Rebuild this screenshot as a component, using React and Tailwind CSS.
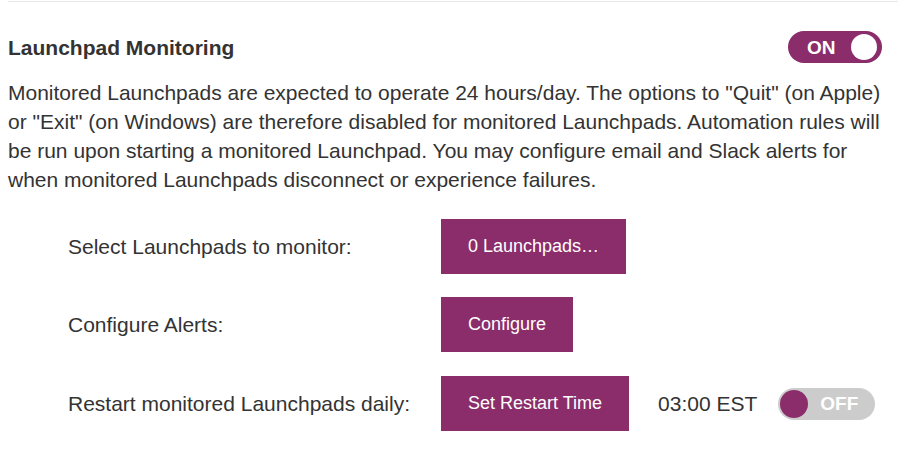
import { useState } from 'react';

function Toggle({ on, onClick, wide }) {
  return (
    <button
      onClick={onClick}
      className={`relative flex items-center h-[32px] rounded-full ${wide} ${
        on ? 'bg-[#8b2d6b]' : 'bg-[#cccccc]'
      }`}
    >
      {on ? (
        <>
          <span className="ml-[19px] text-[19px] font-bold text-white leading-none">ON</span>
          <span className="absolute right-[5px] top-[3px] w-[26px] h-[26px] rounded-full bg-white" />
        </>
      ) : (
        <>
          <span className="absolute left-[2px] top-[2px] w-[28px] h-[28px] rounded-full bg-[#8b2d6b]" />
          <span className="ml-[42px] text-[19px] font-bold text-white leading-none">OFF</span>
        </>
      )}
    </button>
  );
}

function Row({ label, children, className }) {
  return (
    <div className={`flex items-center ${className}`}>
      <div className="w-[373px]">{label}</div>
      {children}
    </div>
  );
}

function PurpleButton({ children }) {
  return (
    <button className="h-[55px] px-[27px] bg-[#8b2d6b] text-white text-[18px] whitespace-nowrap">
      {children}
    </button>
  );
}

export default function App() {
  const [monitoring, setMonitoring] = useState(true);
  const [restart, setRestart] = useState(false);

  return (
    <div
      className="pt-px pl-2 pr-[6px] bg-white text-[#333333] min-h-screen"
      style={{ fontFamily: '"Liberation Sans", Arial, sans-serif' }}
    >
      <div className="border-t border-[#e8e8e8]">
        <div className="flex items-center justify-between mt-[29px] pr-[16px] h-[32px]">
          <h2 className="text-[21px] font-bold leading-[29px]">Launchpad Monitoring</h2>
          <Toggle on={monitoring} onClick={() => setMonitoring(!monitoring)} wide="w-[94px]" />
        </div>

        <p className="mt-[15px] text-[21px] leading-[29px]">
          Monitored Launchpads are expected to operate 24 hours/day. The options to "Quit" (on Apple)
          or "Exit" (on Windows) are therefore disabled for monitored Launchpads. Automation rules will
          be run upon starting a monitored Launchpad. You may configure email and Slack alerts for
          when monitored Launchpads disconnect or experience failures.
        </p>

        <div className="pl-[60px] text-[21px]">
          <Row label="Select Launchpads to monitor:" className="mt-[25px]">
            <PurpleButton>0 Launchpads…</PurpleButton>
          </Row>
          <Row label="Configure Alerts:" className="mt-[23px]">
            <PurpleButton>Configure</PurpleButton>
          </Row>
          <Row label="Restart monitored Launchpads daily:" className="mt-[24px]">
            <PurpleButton>Set Restart Time</PurpleButton>
            <span className="ml-[29px]">03:00 EST</span>
            <span className="ml-[21px]">
              <Toggle on={restart} onClick={() => setRestart(!restart)} wide="w-[97px]" />
            </span>
          </Row>
        </div>
      </div>
    </div>
  );
}
